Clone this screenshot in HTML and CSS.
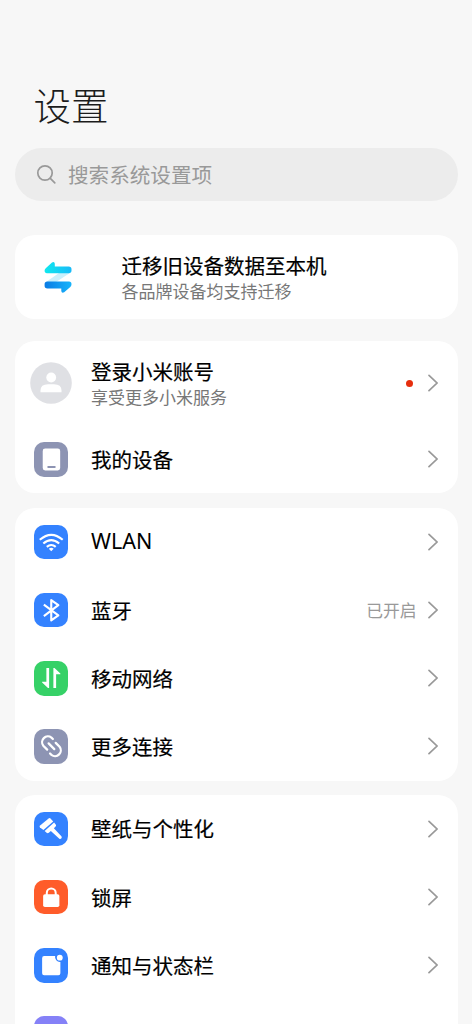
FILE: index.html
```html
<!DOCTYPE html>
<html lang="zh-CN">
<head>
    <meta charset="UTF-8">
    <meta name="viewport" content="width=device-width, initial-scale=1.0">
    <title>设置</title>
    <link rel="stylesheet" href="styles.css">
</head>
<body>

    <!-- Header -->
    <header>
        <h1>设置</h1>
        <div class="search">
            <svg width="22" height="22" viewBox="0 0 22 22" fill="none" stroke="#999" stroke-width="1.7" stroke-linecap="round">
                <circle cx="9" cy="9" r="7.2"/>
                <path d="M14.3 14.3L18.8 18.8"/>
            </svg>
            <span>搜索系统设置项</span>
        </div>
    </header>

    <main>
        <!-- Data migration -->
        <section class="card migrate">
            <svg class="migrate-icon" width="28" height="32" viewBox="0 0 28 32">
                <defs>
                    <linearGradient id="top" x1="0" x2="1">
                        <stop offset="0" stop-color="#10e8ee"/>
                        <stop offset="1" stop-color="#18baf8"/>
                    </linearGradient>
                    <linearGradient id="bottom" x1="0" x2="1">
                        <stop offset="0" stop-color="#0a7be4"/>
                        <stop offset="1" stop-color="#18b4fb"/>
                    </linearGradient>
                </defs>
                <path d="M15 12H26L12 21H2Z" fill="#c9f0fc"/>
                <path d="M2 7L8 1.5Q10.5 0 10.8 2.8V5.5H24.6Q27.5 5.5 27.5 8.2V9.6Q27.5 12.3 24.6 12.3H3Q.6 12.3.6 9.6Q.6 8.3 2 7Z" fill="url(#top)"/>
                <path d="M26.3 26L20.2 31.3Q17.6 32.6 17.3 29.9V27.5H3.4Q.6 27.5.6 24.8V23.2Q.6 20.5 3.4 20.5H25Q27.5 20.5 27.5 23.2Q27.5 24.7 26.3 26Z" fill="url(#bottom)"/>
            </svg>
            <div class="text">
                <div class="label">迁移旧设备数据至本机</div>
                <div class="desc">各品牌设备均支持迁移</div>
            </div>
        </section>

        <!-- Account -->
        <section class="card account">
            <a class="row login">
                <svg class="avatar" width="42" height="42" viewBox="0 0 42 42">
                    <circle cx="21" cy="21" r="20.8" fill="#dfe0e4"/>
                    <circle cx="21.2" cy="15.5" r="4.9" fill="#fff"/>
                    <path d="M10.5 30.3V28.5Q10.5 22.3 18 22.3H24Q31.5 22.3 31.5 28.5V30.3Z" fill="#fff"/>
                </svg>
                <div class="text">
                    <div class="label">登录小米账号</div>
                    <div class="desc">享受更多小米服务</div>
                </div>
                <span class="dot"></span>
                <svg class="arrow" viewBox="0 0 10 18"><path d="M1 1.3L9 9L1 16.7"/></svg>
            </a>
            <a class="row">
                <svg class="icon gray" viewBox="0 0 34 34">
                    <rect x="8.6" y="6.5" width="17.2" height="21.5" rx="2.4" fill="#fff"/>
                    <path d="M13.3 24.7H21.2" stroke="#8d94b3" stroke-width="2"/>
                </svg>
                <span class="label">我的设备</span>
                <svg class="arrow" viewBox="0 0 10 18"><path d="M1 1.3L9 9L1 16.7"/></svg>
            </a>
        </section>

        <!-- Connections -->
        <section class="card">
            <a class="row">
                <svg class="icon blue" viewBox="0 0 34 34" fill="none" stroke="#fff" stroke-width="2.1">
                    <path d="M5.7 14.6Q17 4.8 28.3 14.6M9.2 18.2Q17 11.4 24.8 18.2M12.6 21.6Q17 17.8 21.4 21.6"/>
                    <path d="M14.6 23.4Q17 21.6 19.4 23.4L17 25.9Z" fill="#fff" stroke="none"/>
                </svg>
                <span class="label latin">WLAN</span>
                <svg class="arrow" viewBox="0 0 10 18"><path d="M1 1.3L9 9L1 16.7"/></svg>
            </a>
            <a class="row">
                <svg class="icon blue" viewBox="0 0 34 34" fill="none" stroke="#fff" stroke-width="2.1" stroke-linejoin="round">
                    <path d="M9.7 11.5L24 22L17 27V7L24 12L9.7 22.7"/>
                </svg>
                <span class="label">蓝牙</span>
                <span class="value">已开启</span>
                <svg class="arrow" viewBox="0 0 10 18"><path d="M1 1.3L9 9L1 16.7"/></svg>
            </a>
            <a class="row">
                <svg class="icon green" viewBox="0 0 34 34" fill="#fff">
                    <path d="M12.2 7H14.9V26.5H13.8L8 21.3V20.5H12.2Z"/>
                    <path d="M19.1 26.5H21.8V13H26V12.2L20.2 7H19.1Z"/>
                </svg>
                <span class="label">移动网络</span>
                <svg class="arrow" viewBox="0 0 10 18"><path d="M1 1.3L9 9L1 16.7"/></svg>
            </a>
            <a class="row">
                <svg class="icon gray" viewBox="0 0 34 34" fill="none" stroke="#fff" stroke-width="2.2" stroke-linecap="round">
                    <path d="M13 20.3L9.2 16.5A5.7 5.7 0 0 1 17.2 8.5L18.6 9.9"/>
                    <path d="M21.4 13.7L25.2 17.5A5.7 5.7 0 0 1 17.2 25.5L15.8 24.1"/>
                    <path d="M14.4 14.2L20 19.8"/>
                </svg>
                <span class="label">更多连接</span>
                <svg class="arrow" viewBox="0 0 10 18"><path d="M1 1.3L9 9L1 16.7"/></svg>
            </a>
        </section>

        <!-- Display and notifications -->
        <section class="card">
            <a class="row">
                <svg class="icon blue" viewBox="0 0 34 34" fill="#fff">
                    <path d="M6 13.4L14.4 6.4Q15.5 5.5 16.5 6.6L18.9 9.4L9.3 17.8L5.9 15.2Q5 14.3 6 13.4Z"/>
                    <path d="M10.5 18.7L19.8 10.4L21.4 12.2Q22.3 13.3 21.3 14.3L19.6 16L27 23.9Q27.9 25 26.9 26.1Q25.8 27 24.7 26L16.6 18.7L14.6 20.4Q13.5 21.3 12.4 20.4Z"/>
                </svg>
                <span class="label">壁纸与个性化</span>
                <svg class="arrow" viewBox="0 0 10 18"><path d="M1 1.3L9 9L1 16.7"/></svg>
            </a>
            <a class="row">
                <svg class="icon orange" viewBox="0 0 34 34">
                    <rect x="9" y="14" width="16" height="12.7" rx="1.8" fill="#fff"/>
                    <path d="M12.6 16V12.7A4.4 4.4 0 0 1 21.4 12.7V16" fill="none" stroke="#fff" stroke-width="2"/>
                </svg>
                <span class="label">锁屏</span>
                <svg class="arrow" viewBox="0 0 10 18"><path d="M1 1.3L9 9L1 16.7"/></svg>
            </a>
            <a class="row">
                <svg class="icon blue" viewBox="0 0 34 34" fill="#fff">
                    <path d="M10 8H20.8A4.8 4.8 0 0 0 26 13.7V24.8Q26 26.8 24 26.8H10Q8 26.8 8 24.8V10Q8 8 10 8Z"/>
                    <circle cx="25.4" cy="9.5" r="2.9"/>
                </svg>
                <span class="label">通知与状态栏</span>
                <svg class="arrow" viewBox="0 0 10 18"><path d="M1 1.3L9 9L1 16.7"/></svg>
            </a>
            <a class="row">
                <svg class="icon purple" viewBox="0 0 34 34"></svg>
            </a>
        </section>
    </main>

</body>
</html>
```
FILE: styles.css
```css
* {
    box-sizing: border-box;
}

body {
    margin: 0;
    background-color: #f7f7f7;
    color: #000;
    font-family: "Noto Sans CJK SC", sans-serif;
}

header {
    padding: 76.5px 14.5px 0;
}

h1 {
    margin: 0 0 17.5px 19px;
    font-size: 37.5px;
    font-weight: 300;
    line-height: 54px;
    color: #1c1c1c;
}

.search {
    display: flex;
    align-items: center;
    gap: 10px;
    height: 53px;
    padding-left: 21.5px;
    border-radius: 27px;
    background-color: #ececec;
    color: #999;
    font-size: 20.6px;
}

.search span {
    padding-bottom: 2px;
}

main {
    height: 823px;
    padding: 34px 14.5px 0;
    overflow: hidden;
}

.card {
    margin-bottom: 14.3px;
    border-radius: 20px;
    background-color: #fff;
}

.migrate {
    display: flex;
    align-items: center;
    height: 84px;
    margin-bottom: 22px;
    padding-left: 29.5px;
}

.migrate-icon {
    margin-right: 49.5px;
}

.text {
    padding-bottom: 2px;
}

.row {
    display: flex;
    align-items: center;
    height: 68.2px;
    padding: 0 20px 0 19px;
}

.login {
    height: 84.3px;
    padding-left: 15.5px;
}

.avatar {
    margin-right: 19px;
}

.icon {
    width: 34.5px;
    height: 34.5px;
    margin-right: 23px;
    border-radius: 10px;
}

.blue {
    background-color: #3482ff;
}

.green {
    background-color: #36d167;
}

.gray {
    background-color: #8d94b3;
}

.orange {
    background-color: #ff5c2a;
}

.purple {
    background-color: #8581f7;
}

.label {
    font-size: 20.5px;
    -webkit-text-stroke: 0.2px #000;
    line-height: 28px;
}

.row > .label {
    padding-bottom: 1px;
}

.latin {
    font-family: "Noto Sans", sans-serif;
    font-size: 21.5px;
    -webkit-text-stroke: 0;
}

.desc {
    font-size: 17px;
    line-height: 23px;
    color: #777;
}

.value {
    margin-left: auto;
    font-size: 16.8px;
    color: #999;
}

.dot {
    width: 7px;
    height: 7px;
    margin-left: auto;
    border-radius: 50%;
    background-color: #e62e0d;
}

.arrow {
    width: 10px;
    height: 18px;
    margin-left: auto;
    fill: none;
    stroke: #999;
    stroke-width: 1.7;
    stroke-linecap: round;
}

.value + .arrow {
    margin-left: 11px;
}

.dot + .arrow {
    margin-left: 14.5px;
}
```
